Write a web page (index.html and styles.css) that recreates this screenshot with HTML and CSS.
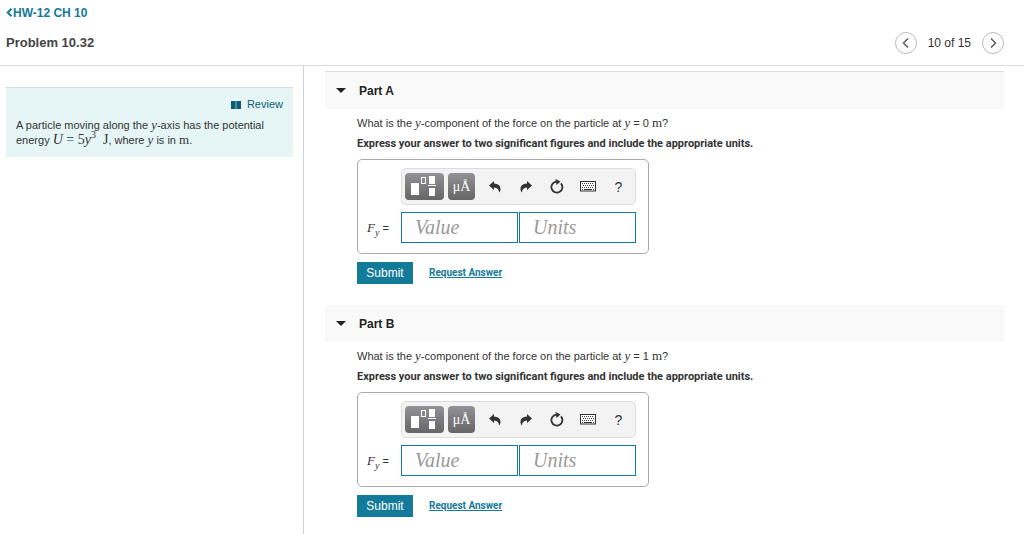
FILE: index.html
```html
<!DOCTYPE html>
<html lang="en">
<head>
    <meta charset="UTF-8">
    <meta name="viewport" content="width=device-width, initial-scale=1.0">
    <title>Problem 10.32</title>
    <link rel="stylesheet" href="styles.css">
</head>
<body>
    <!-- shared icons -->
    <svg class="sprite" aria-hidden="true">
        <symbol id="icon-template" viewBox="0 0 39 27">
            <rect x="6" y="10" width="8" height="12" fill="#fff"/>
            <rect x="16.500" y="4.500" width="4" height="6" fill="none" stroke="#fff"/>
            <path d="M24 3h6v8h-6zM23 12h8v1h-8zM24 15h6v8h-6z" fill="#fff"/>
        </symbol>
        <symbol id="icon-undo" viewBox="0 0 12 12">
            <path d="M0 4.500L5 0v2.500c4 .2 6.500 2 6.500 5.500 0 1.500-.5 2.500-1.500 3.500C10 8.500 8.500 6.700 5 6.500V9z" fill="#333"/>
        </symbol>
        <symbol id="icon-redo" viewBox="0 0 12 12">
            <path d="M12 4.500L7 0v2.500C3 2.700.5 4.500.5 8c0 1.500.5 2.500 1.500 3.500C2 8.500 3.500 6.700 7 6.500V9z" fill="#333"/>
        </symbol>
        <symbol id="icon-reset" viewBox="0 0 14 15">
            <path d="M10.900 4.300a5.500 5.500 0 1 1-4.700-1.700" fill="none" stroke="#333" stroke-width="1.800"/>
            <path d="M5.500 0l5 2.600-4 3.400z" fill="#333"/>
        </symbol>
        <symbol id="icon-keyboard" viewBox="0 0 16 11">
            <rect x=".5" y=".5" width="15" height="9.500" fill="#fff" stroke="#333"/>
            <path d="M2 2.500h12M3 4.500h11M2 6.500h11" stroke="#444" stroke-dasharray="1 1"/>
            <path d="M2 8.500h1M4 8.500h8M13 8.500h1" stroke="#333"/>
        </symbol>
    </svg>

    <header class="page-header">
        <div class="titles">
            <a href="#" class="back-link">
                <svg width="7" height="9" viewBox="0 0 7 9" aria-hidden="true"><path d="M5.500 .7L1.700 4.500l3.800 3.800" fill="none" stroke="#147a99" stroke-width="2"/></svg>HW-12 CH 10
            </a>
            <h1>Problem 10.32</h1>
        </div>
        <nav class="pager" aria-label="Problems">
            <button type="button" class="round" aria-label="Previous">
                <svg width="10" height="10" viewBox="0 0 10 10"><path d="M7 .5L2.500 5 7 9.500" fill="none" stroke="#555" stroke-width="1.400"/></svg>
            </button>
            <span>10 of 15</span>
            <button type="button" class="round" aria-label="Next">
                <svg width="10" height="10" viewBox="0 0 10 10"><path d="M3 .5L7.500 5 3 9.500" fill="none" stroke="#555" stroke-width="1.400"/></svg>
            </button>
        </nav>
    </header>

    <div class="columns">
        <aside class="sidebar">
            <div class="intro">
                <a href="#" class="review">
                    <svg width="10" height="8" viewBox="0 0 10 8" aria-hidden="true"><path d="M0 0h4.700v8H0zM5.300 0H10v8H5.300z" fill="#0b5c73"/></svg>
                    Review
                </a>
                <p>A particle moving along the <i class="math">y</i>-axis has the potential energy <span class="math formula"><i>U</i> = 5<i>y</i><sup>3</sup>&nbsp; J</span>, where <i class="math">y</i> is in <span class="math">m</span>.</p>
            </div>
        </aside>

        <main>
            <section class="part">
                <h2 class="part-header"><span class="caret"></span>Part A</h2>
                <div class="part-body">
                    <p>What is the <i class="math">y</i>-component of the force on the particle at <i class="math">y</i> = 0 <span class="math">m</span>?</p>
                    <p class="instructions">Express your answer to two significant figures and include the appropriate units.</p>
                    <form class="answer">
                        <div class="answer-box">
                            <div class="toolbar">
                                <button type="button" class="dark wide" aria-label="Templates"><svg width="39" height="27"><use href="#icon-template"/></svg></button>
                                <button type="button" class="dark">μÅ</button>
                                <button type="button" class="tool" aria-label="Undo"><svg width="12" height="12"><use href="#icon-undo"/></svg></button>
                                <button type="button" class="tool" aria-label="Redo"><svg width="12" height="12"><use href="#icon-redo"/></svg></button>
                                <button type="button" class="tool" aria-label="Reset"><svg width="14" height="15"><use href="#icon-reset"/></svg></button>
                                <button type="button" class="tool" aria-label="Keyboard shortcuts"><svg width="16" height="11"><use href="#icon-keyboard"/></svg></button>
                                <button type="button" class="tool">?</button>
                            </div>
                            <label for="value-a"><span class="math"><i>F</i><sub><i>y</i></sub></span> =</label>
                            <div class="fields">
                                <input type="text" id="value-a" placeholder="Value">
                                <input type="text" aria-label="Units" placeholder="Units">
                            </div>
                        </div>
                        <div class="actions">
                            <button type="submit" class="submit">Submit</button>
                            <a href="#">Request Answer</a>
                        </div>
                    </form>
                </div>
            </section>

            <section class="part">
                <h2 class="part-header"><span class="caret"></span>Part B</h2>
                <div class="part-body">
                    <p>What is the <i class="math">y</i>-component of the force on the particle at <i class="math">y</i> = 1 <span class="math">m</span>?</p>
                    <p class="instructions">Express your answer to two significant figures and include the appropriate units.</p>
                    <form class="answer">
                        <div class="answer-box">
                            <div class="toolbar">
                                <button type="button" class="dark wide" aria-label="Templates"><svg width="39" height="27"><use href="#icon-template"/></svg></button>
                                <button type="button" class="dark">μÅ</button>
                                <button type="button" class="tool" aria-label="Undo"><svg width="12" height="12"><use href="#icon-undo"/></svg></button>
                                <button type="button" class="tool" aria-label="Redo"><svg width="12" height="12"><use href="#icon-redo"/></svg></button>
                                <button type="button" class="tool" aria-label="Reset"><svg width="14" height="15"><use href="#icon-reset"/></svg></button>
                                <button type="button" class="tool" aria-label="Keyboard shortcuts"><svg width="16" height="11"><use href="#icon-keyboard"/></svg></button>
                                <button type="button" class="tool">?</button>
                            </div>
                            <label for="value-b"><span class="math"><i>F</i><sub><i>y</i></sub></span> =</label>
                            <div class="fields">
                                <input type="text" id="value-b" placeholder="Value">
                                <input type="text" aria-label="Units" placeholder="Units">
                            </div>
                        </div>
                        <div class="actions">
                            <button type="submit" class="submit">Submit</button>
                            <a href="#">Request Answer</a>
                        </div>
                    </form>
                </div>
            </section>
        </main>
    </div>
</body>
</html>
```
FILE: styles.css
```css
* {
    box-sizing: border-box;
}

body {
    margin: 0;
    min-height: 100vh;
    display: flex;
    flex-direction: column;
    background: #fff;
    color: #333;
    font-family: "Liberation Sans", Arial, sans-serif;
    font-size: 11px;
    line-height: 14px;
}

h1, h2, p {
    margin: 0;
}

button, input {
    font-family: inherit;
    padding: 0;
}

a {
    color: #147a99;
}

.sprite {
    display: none;
}

.page-header {
    display: flex;
    justify-content: space-between;
    padding: 6px 20px 11px 6px;
    border-bottom: 1px solid #ddd;
}

.titles {
    display: flex;
    flex-direction: column;
    gap: 14px;
    padding-bottom: 4px;
}

.back-link {
    font-size: 12px;
    line-height: 15px;
    font-weight: bold;
    text-decoration: none;
}

h1 {
    font-size: 13px;
    line-height: 15px;
    color: #444;
}

.pager {
    display: flex;
    align-items: center;
    align-self: flex-end;
    gap: 11px;
    font-size: 12px;
}

.round {
    display: flex;
    align-items: center;
    justify-content: center;
    width: 22px;
    height: 22px;
    background: #fff;
    border: 1px solid #bbb;
    border-radius: 50%;
}

.columns {
    flex: 1;
    display: grid;
    grid-template-columns: 304px 1fr;
}

.sidebar {
    padding: 21px 10px 0 6px;
    border-right: 1px solid #c8d0dc;
}

.intro {
    padding: 9px 10px;
    background: #e6f6f7;
    border-top: 1px solid #d5dede;
    line-height: 15px;
}

.review {
    display: flex;
    align-items: center;
    justify-content: flex-end;
    gap: 6px;
    margin-bottom: 6px;
    color: #0b5c73;
    text-decoration: none;
}

.math {
    font-family: "Liberation Serif", "Times New Roman", serif;
    font-size: 13px;
    line-height: 1;
}

.formula {
    font-size: 14px;
}

sup, sub {
    font-size: 10px;
    line-height: 0;
}

main {
    padding: 5px 20px 0 21px;
}

.part + .part {
    margin-top: 21px;
}

.part-header {
    display: flex;
    align-items: center;
    gap: 13px;
    height: 37px;
    padding-left: 11px;
    background: #f9f9f9;
    font-size: 12px;
    color: #222;
}

.part:first-child .part-header {
    height: 38px;
    border-top: 1px solid #ddd;
}

.caret {
    border: 5px solid transparent;
    border-top-color: #222;
    border-bottom: 0;
}

.part-body {
    padding: 7px 0 0 32px;
}

.instructions {
    margin: 7px 0 8px;
    font-family: Roboto, Arial, sans-serif;
    font-weight: bold;
}

.answer-box {
    display: inline-grid;
    grid-template-columns: 34px auto;
    align-items: center;
    gap: 7px 0;
    padding: 8px 12px 10px 9px;
    border: 1px solid #aaa;
    border-radius: 5px;
    vertical-align: top;
}

.answer-box label {
    white-space: nowrap;
}

.toolbar {
    grid-column: 2;
    display: flex;
    align-items: center;
    height: 37px;
    padding: 0 1px 0 3px;
    background: #f3f3f3;
    border: 1px solid #ddd;
    border-radius: 5px;
}

.dark {
    display: flex;
    align-items: center;
    justify-content: center;
    width: 27px;
    height: 27px;
    margin-right: 4px;
    background: linear-gradient(#929298, #666);
    border: 0;
    border-radius: 4px;
    color: #fff;
    font-family: "Liberation Serif", "Times New Roman", serif;
    font-size: 14px;
}

.wide {
    width: 39px;
}

.tool {
    display: flex;
    align-items: center;
    justify-content: center;
    width: 31px;
    height: 27px;
    background: none;
    border: 0;
    color: #333;
    font-size: 14px;
}

.fields {
    display: flex;
    gap: 1px;
}

.fields input {
    width: 117px;
    height: 31px;
    padding-left: 13px;
    background: #fff;
    border: 1px solid #147a99;
    border-radius: 0;
    font-family: "Liberation Serif", "Times New Roman", serif;
    font-size: 20px;
    font-style: italic;
}

.fields input::placeholder {
    color: #999;
}

.actions {
    display: flex;
    align-items: center;
    gap: 16px;
    margin-top: 8px;
}

.submit {
    width: 56px;
    height: 22px;
    background: #147a99;
    border: 0;
    color: #fff;
    font-size: 12px;
}

.actions a {
    font-family: Roboto, Arial, sans-serif;
    font-size: 10px;
    font-weight: bold;
}
```
